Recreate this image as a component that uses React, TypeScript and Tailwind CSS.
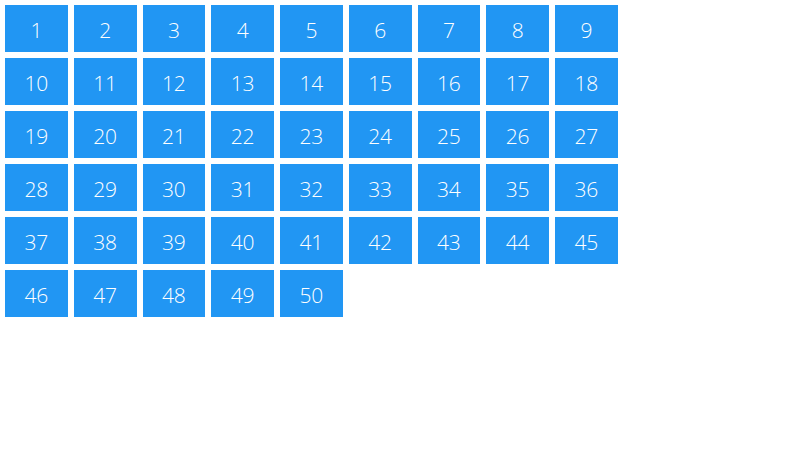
const tiles = Array.from({ length: 50 }, (_, i) => i + 1);

export default function App() {
    return (
        <div className="w-[800px] h-[450px] bg-white" style={{ fontFamily: '"Open Sans", "Noto Sans", sans-serif' }}>
            <div className="grid grid-cols-[repeat(9,62.75px)] gap-x-[6px] gap-y-[6px] pl-[5px] pt-[5px]">
                {tiles.map((n) => (
                    <div
                        key={n}
                        className="h-[47px] bg-[#2196f3] text-white text-[21px] font-light flex items-center justify-center pt-[4px]"
                    >
                        {n}
                    </div>
                ))}
            </div>
        </div>
    );
}
